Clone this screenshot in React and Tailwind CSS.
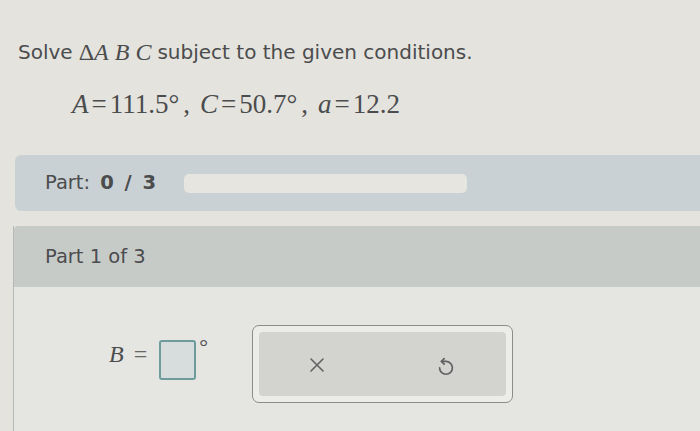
import React from 'react';

const sans = { fontFamily: '"DejaVu Sans", Verdana, sans-serif' };
const serif = { fontFamily: '"Liberation Serif", "Times New Roman", serif' };

function UndoIcon() {
  return (
    <svg width="22" height="22" viewBox="0 0 24 24" fill="none" stroke="#5f6163" strokeWidth="1.8" strokeLinecap="round" strokeLinejoin="round">
      <path d="M7 7 H12 A7 7 0 1 1 5 14" />
      <path d="M10 4 L7 7 L10 10" />
    </svg>
  );
}

function CloseIcon() {
  return (
    <svg width="16" height="16" viewBox="0 0 16 16" fill="none" stroke="#5f6163" strokeWidth="1.6" strokeLinecap="round">
      <path d="M2 2 L14 14 M14 2 L2 14" />
    </svg>
  );
}

function Eq({ l, r }) {
  return (
    <span>
      <i>{l}</i>
      <span className="mx-[3px]">=</span>
      {r}
    </span>
  );
}

export default function App() {
  return (
    <div className="w-[700px] h-[431px] overflow-hidden bg-[#e4e3de] text-[#4b4c4d]" style={sans}>
      {/* question */}
      <div className="pt-[40px] pl-[18px] h-[64px] text-[20px] leading-[24px] flex items-center">
        <span>Solve</span>
        <span className="ml-[6px] text-[24px]" style={serif}>
          Δ<i>A</i> <i>B</i> <i>C</i>
        </span>
        <span className="ml-[6px]">subject to the given conditions.</span>
      </div>
      <div className="mt-[26px] pl-[72px] h-[28px] text-[27px] leading-[28px]" style={serif}>
        <Eq l="A" r="111.5°" />
        <span className="ml-[4px] mr-[10px]">,</span>
        <Eq l="C" r="50.7°" />
        <span className="ml-[4px] mr-[10px]">,</span>
        <Eq l="a" r="12.2" />
      </div>

      {/* progress */}
      <div className="mt-[37px] ml-[15px] h-[56px] rounded-tl-md rounded-bl-md bg-[#c9d1d4] flex items-center pl-[30px]">
        <span className="text-[19.5px] [word-spacing:4px]">
          Part: <b className="font-bold">0 / 3</b>
        </span>
        <div className="ml-[28px] w-[283px] h-[19px] rounded-[5px] bg-[#e6e5df]" />
      </div>

      {/* part 1 */}
      <div className="mt-[15px] ml-[13px] border-l border-[#b4b8b6]">
        <div className="h-[61px] bg-[#c7cbc8] flex items-center pl-[31px] text-[19.5px] rounded-tl-sm">
          Part 1 of 3
        </div>
        <div className="h-[160px] bg-[#e5e5e1] pt-[38px]">
          <div className="flex items-start">
            <div className="ml-[95px] mt-[15px] flex items-center text-[24px] leading-[28px]" style={serif}>
              <i>B</i>
              <span className="ml-[10px] text-[#666]">=</span>
            </div>
            <div className="ml-[12px] mt-[15px] w-[37px] h-[40px] border-2 border-[#6e9b9b] rounded-[3px] bg-[#d7dddc]" />
            <span className="ml-[3px] mt-[12px] text-[22px] leading-[20px]" style={serif}>°</span>
            <div className="ml-[44px] w-[261px] h-[78px] rounded-[7px] border-[1.5px] border-[#8b8c8c] bg-[#ecece8] p-[6px]">
              <div className="h-full rounded-[4px] bg-[#d3d3d0] flex items-center">
                <div className="ml-[50px] pt-[2px]"><CloseIcon /></div>
                <div className="ml-[110px] pt-[4px]"><UndoIcon /></div>
              </div>
            </div>
          </div>
        </div>
      </div>
    </div>
  );
}
